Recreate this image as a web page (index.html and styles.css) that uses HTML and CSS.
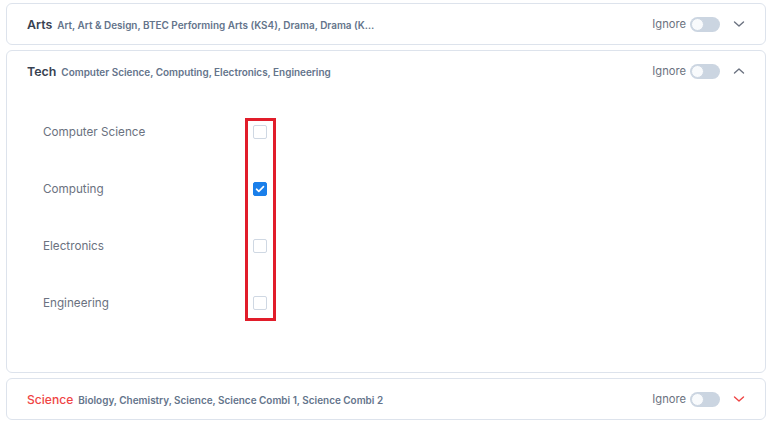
FILE: index.html
```html
<!DOCTYPE html>
<html>
<head>
<meta charset="utf-8">
<link rel="stylesheet" href="styles.css">
</head>
<body>
<div class="list">
  <section class="card">
    <div class="head">
      <div class="titles">
        <span class="title">Arts</span>
        <span class="sub">Art, Art &amp; Design, BTEC Performing Arts (KS4), Drama, Drama (K…</span>
      </div>
      <div class="actions">
        <span class="ignore">Ignore</span>
        <span class="toggle"><span class="knob"></span></span>
        <svg class="chev" width="12" height="8" viewBox="0 0 12 8"><path d="M1.5 2l4.5 4 4.5-4" fill="none" stroke="currentColor" stroke-width="1.4" stroke-linecap="round" stroke-linejoin="round"/></svg>
      </div>
    </div>
  </section>

  <section class="card open">
    <div class="head">
      <div class="titles">
        <span class="title">Tech</span>
        <span class="sub">Computer Science, Computing, Electronics, Engineering</span>
      </div>
      <div class="actions">
        <span class="ignore">Ignore</span>
        <span class="toggle"><span class="knob"></span></span>
        <svg class="chev" width="12" height="8" viewBox="0 0 12 8"><path d="M1.5 6l4.5-4 4.5 4" fill="none" stroke="currentColor" stroke-width="1.4" stroke-linecap="round" stroke-linejoin="round"/></svg>
      </div>
    </div>
    <div class="body">
      <div class="rows">
        <div class="row"><span class="label">Computer Science</span><span class="box"></span></div>
        <div class="row"><span class="label">Computing</span><span class="box checked"><svg width="10" height="8" viewBox="0 0 10 8"><path d="M1.5 4.2l2.3 2.2L8.5 1.6" fill="none" stroke="#fff" stroke-width="1.6" stroke-linecap="round" stroke-linejoin="round"/></svg></span></div>
        <div class="row"><span class="label">Electronics</span><span class="box"></span></div>
        <div class="row"><span class="label">Engineering</span><span class="box"></span></div>
        <div class="highlight"></div>
      </div>
    </div>
  </section>

  <section class="card">
    <div class="head">
      <div class="titles">
        <span class="title red">Science</span>
        <span class="sub">Biology, Chemistry, Science, Science Combi 1, Science Combi 2</span>
      </div>
      <div class="actions">
        <span class="ignore">Ignore</span>
        <span class="toggle"><span class="knob"></span></span>
        <svg class="chev red" width="12" height="8" viewBox="0 0 12 8"><path d="M1.5 2l4.5 4 4.5-4" fill="none" stroke="currentColor" stroke-width="1.4" stroke-linecap="round" stroke-linejoin="round"/></svg>
      </div>
    </div>
  </section>
</div>
</body>
</html>
```

FILE: styles.css
```css
* { box-sizing: border-box; }
html, body { margin: 0; background: #fff; }
body {
  font-family: Inter, "Noto Sans", "Liberation Sans", sans-serif;
  padding: 3px 2px 0 6px;
}
.list { display: flex; flex-direction: column; gap: 5px; }
.card {
  border: 1px solid #dde3ec;
  border-radius: 6px;
  background: #fff;
}
.head {
  height: 40px;
  display: flex;
  align-items: center;
  justify-content: space-between;
  padding: 0 20px 0 20px;
}
.titles { display: flex; align-items: baseline; gap: 5px; min-width: 0; }
.title { font-size: 12.4px; font-weight: 600; color: #374151; }
.title.red { color: #ef4444; font-weight: 500; font-size: 12.1px; }
.sub { font-size: 9.95px; font-weight: 600; color: #64748b; white-space: nowrap; }
.actions { display: flex; align-items: center; }
.ignore { font-size: 11.2px; color: #6b7280; margin-right: 4px; }
.toggle {
  width: 30px; height: 15px; border-radius: 8px;
  background: #cbd5e1;
  display: flex; align-items: center; padding-left: 1px;
}
.knob {
  width: 13px; height: 13px; border-radius: 50%;
  background: #f8fafc; border: 1px solid #cbd5e1;
}
.chev { color: #6b7280; margin-left: 13px; }
.chev.red { color: #ef4444; }
.body { padding: 12px 0 41px 36px; }
.rows { position: relative; display: grid; grid-template-columns: 210px 14px; }
.row { display: contents; }
.label {
  height: 57px; display: flex; align-items: center;
  font-size: 11.7px; color: #6b7280;
}
.box {
  align-self: center;
  width: 14px; height: 14px;
  border: 1px solid #cfd8e3; border-radius: 2px; background: #fff;
  display: flex; align-items: center; justify-content: center;
}
.box.checked { background: #1a7fea; border-color: #1a7fea; }
.highlight {
  position: absolute;
  left: 202px; top: 15px;
  width: 31px; height: 203px;
  border: 3px solid #e11d2a;
  pointer-events: none;
}
```
